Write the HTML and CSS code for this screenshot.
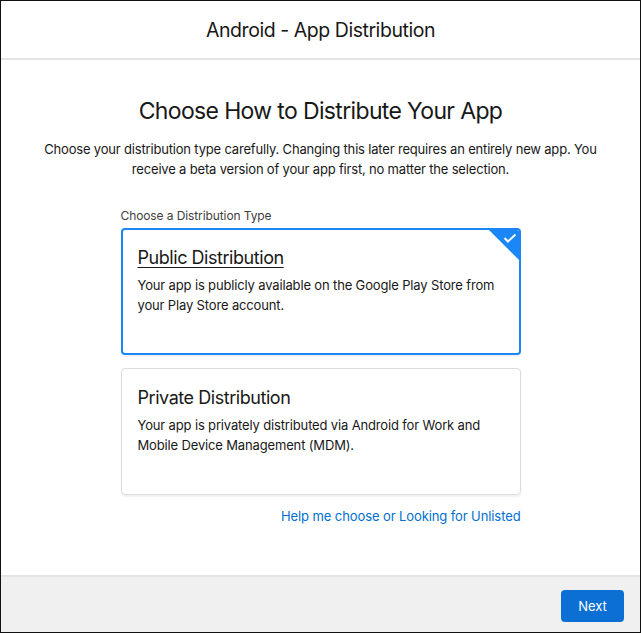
FILE: index.html
```html
<!DOCTYPE html>
<html lang="en">

<head>
    <meta charset="UTF-8">
    <meta name="viewport" content="width=device-width, initial-scale=1.0">
    <title>Android - App Distribution</title>
    <link rel="stylesheet" href="styles.css">
</head>

<body>
    <div class="modal">
        <div class="modal-header">
            <h2>Android - App Distribution</h2>
        </div>

        <div class="modal-body">
            <h1>Choose How to Distribute Your App</h1>
            <p class="intro">Choose your distribution type carefully. Changing this later requires an entirely new app. You
                receive a beta version of your app first, no matter the selection.</p>

            <div class="choices">
                <div class="choices-label">Choose a Distribution Type</div>

                <div class="tile selected">
                    <span class="tile-check">
                        <svg width="14" height="10" viewBox="0 0 14 10">
                            <path d="M1.5 5 L5 8.5 L12.5 1.5" fill="none" stroke="#fff" stroke-width="2" />
                        </svg>
                    </span>
                    <h3>Public Distribution</h3>
                    <p>Your app is publicly available on the Google Play Store from your Play Store account.</p>
                </div>

                <div class="tile">
                    <h3>Private Distribution</h3>
                    <p>Your app is privately distributed via Android for Work and Mobile Device Management (MDM).</p>
                </div>

                <div class="help-link">
                    <a href="#">Help me choose or Looking for Unlisted</a>
                </div>
            </div>
        </div>

        <div class="modal-footer">
            <button type="button">Next</button>
        </div>
    </div>
</body>

</html>
```

FILE: styles.css
```css
body {
    margin: 0;
    padding: 0;
    font-family: "Inter", "Liberation Sans", sans-serif;
    color: #181818;
    background-color: #fff;
}

.modal {
    width: 639px;
    height: 631px;
    border: 1px solid #111;
    display: flex;
    flex-direction: column;
}

.modal-header {
    height: 57px;
    border-bottom: 2px solid #e5e5e5;
    display: flex;
    align-items: center;
    justify-content: center;
}

.modal-header h2 {
    margin: 0;
    font-size: 19.5px;
    font-weight: 400;
    letter-spacing: -0.45px;
}

.modal-body {
    flex: 1;
    padding-top: 36px;
    text-align: center;
}

.modal-body h1 {
    margin: 0;
    font-size: 23px;
    font-weight: 400;
    letter-spacing: -0.65px;
    line-height: 30px;
}

.intro {
    margin: 13px auto 0 auto;
    width: 580px;
    font-size: 13px;
    line-height: 20px;
    letter-spacing: -0.18px;
}

.choices {
    width: 400px;
    margin: 28px auto 0 auto;
    text-align: left;
}

.choices-label {
    font-size: 12px;
    line-height: 18px;
    color: #3e3e3c;
    margin-bottom: 3px;
    letter-spacing: -0.1px;
}

.tile {
    position: relative;
    height: 127px;
    box-sizing: border-box;
    padding: 16px 16px;
    border: 1px solid #dddbda;
    border-radius: 4px;
    box-shadow: 0 2px 2px rgba(0, 0, 0, 0.06);
    margin-bottom: 13px;
    overflow: hidden;
}

.tile.selected {
    border: 2px solid #1b86f5;
    padding: 15px 15px;
}

.tile h3 {
    margin: 0;
    font-size: 18px;
    font-weight: 400;
    line-height: 26px;
    letter-spacing: -0.45px;
}

.tile.selected h3 {
    text-decoration: underline;
    text-underline-offset: 3px;
    text-decoration-thickness: 1px;
}

.tile p {
    margin: 4px 0 0 0;
    font-size: 13px;
    line-height: 20px;
    letter-spacing: -0.15px;
}

.tile-check {
    position: absolute;
    top: 0;
    right: 0;
    width: 0;
    height: 0;
    border-top: 30px solid #1b86f5;
    border-left: 30px solid transparent;
}

.tile-check svg {
    position: absolute;
    top: -27px;
    right: 2px;
}

.help-link {
    text-align: right;
    margin-top: 11px;
    font-size: 13px;
    letter-spacing: -0.1px;
}

.help-link a {
    color: #0070d2;
    text-decoration: none;
}

.modal-footer {
    height: 55px;
    border-top: 2px solid #e5e5e5;
    background-color: #f0f0f0;
    display: flex;
    align-items: center;
    justify-content: flex-end;
    padding-right: 16px;
}

.modal-footer button {
    width: 63px;
    height: 32px;
    margin-top: 2px;
    background-color: #0b6fd3;
    color: #fff;
    border: none;
    border-radius: 4px;
    font-family: inherit;
    font-size: 13px;
    cursor: pointer;
}
```
